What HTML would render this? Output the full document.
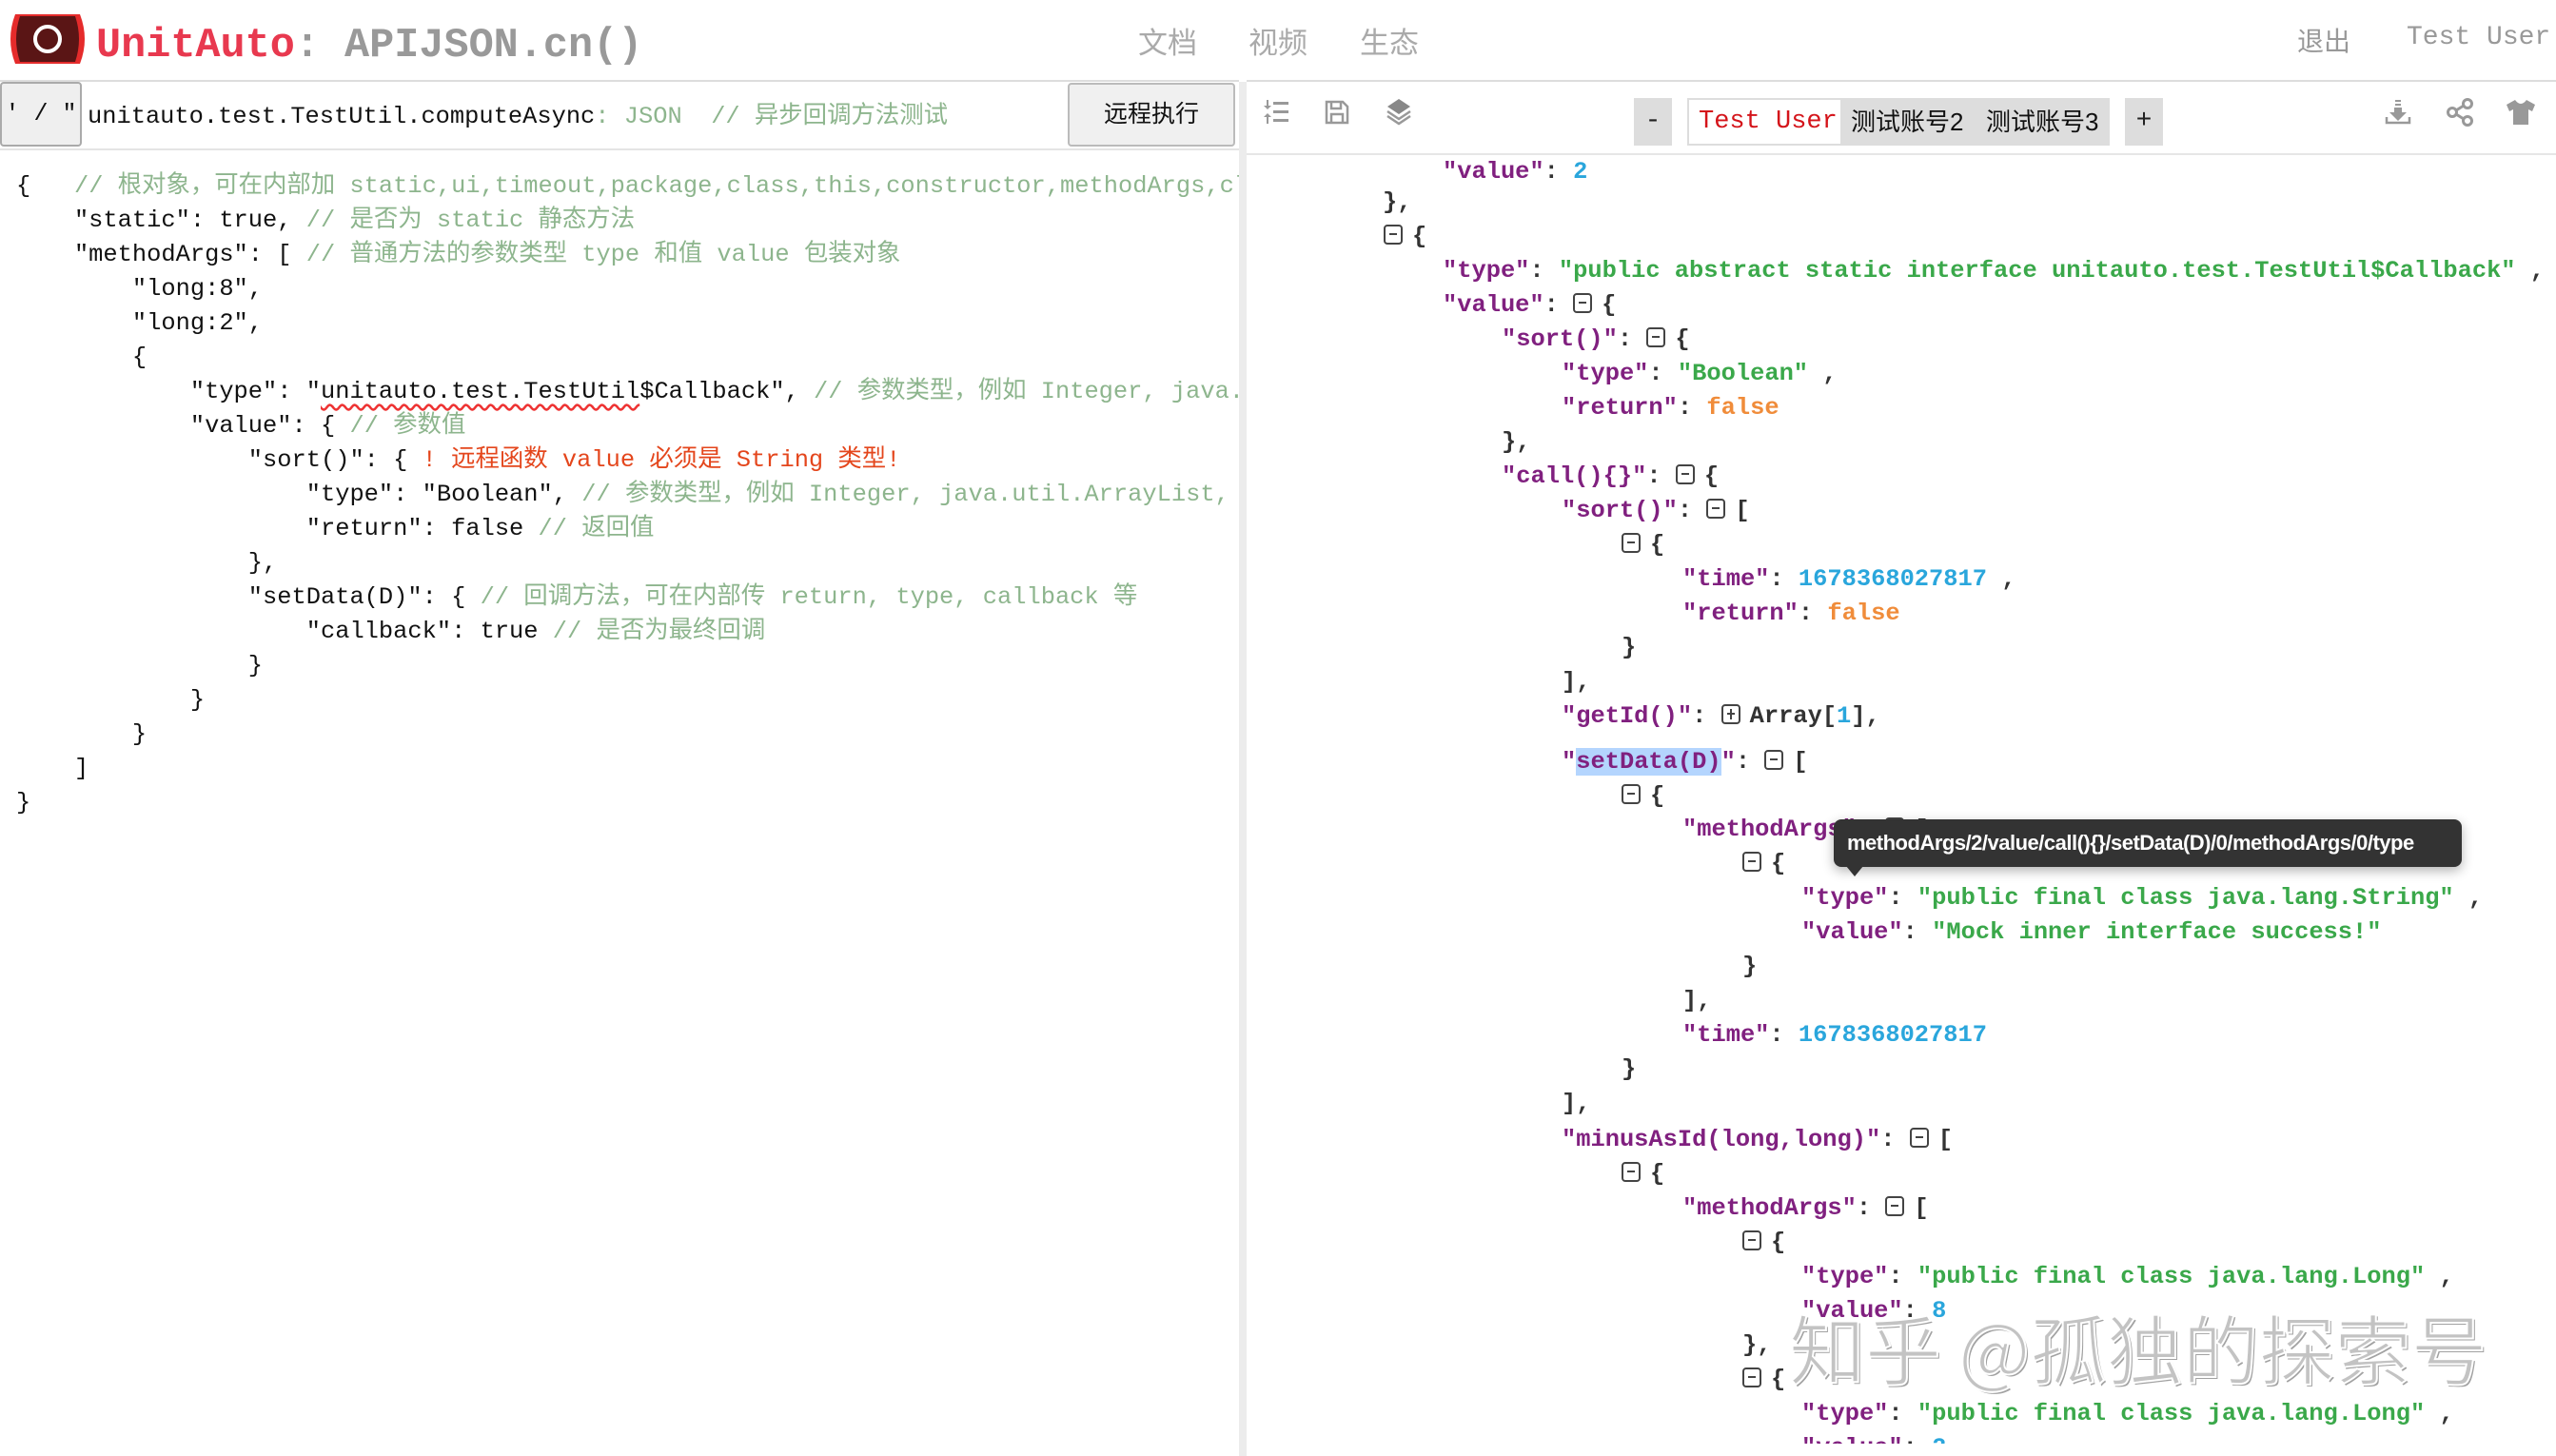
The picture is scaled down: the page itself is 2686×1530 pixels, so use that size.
<!DOCTYPE html>
<html><head><meta charset="utf-8">
<style>
*{margin:0;padding:0;box-sizing:border-box}
body{width:2686px;height:1530px;overflow:hidden;background:#fff;position:relative;font-family:"Liberation Mono","Noto Sans CJK SC",monospace}
.abs{position:absolute;white-space:pre}
.nav{position:absolute;top:20px;font-family:"Liberation Sans","Noto Sans CJK SC",sans-serif;font-size:31px;color:#aaa}
#left{position:absolute;left:0;top:164px;width:1302px;height:1366px;overflow:hidden}
#left .l{position:absolute;left:17px;font-size:25.4px;line-height:36px;height:36px;white-space:pre;color:#111}
.c{color:#8db58d}
.w{color:#e4461c}
.sq{text-decoration:underline wavy #e33;text-underline-offset:6px}
#div{position:absolute;left:1302px;top:86px;width:8px;height:1444px;background:#ececec}
#right{position:absolute;left:1310px;top:163px;width:1376px;height:1367px;overflow:hidden}
#ri{position:absolute;left:0;top:6px;width:1376px;height:1400px}
.r{position:absolute;font-size:25.4px;line-height:36px;height:36px;white-space:pre;font-weight:bold;color:#333}
.k{color:#80207f}.s{color:#3aa84a}.n{color:#2aa6dc}.f{color:#f08c3a}
.b{display:inline-block;width:20px;height:21px;border:2px solid #444;border-radius:4px;vertical-align:-2px;position:relative;margin-right:10px}
.b:after{content:"";position:absolute;left:4px;right:4px;top:7px;height:2px;background:#444}
.p:before{content:"";position:absolute;top:3px;bottom:3px;left:7px;width:2px;background:#444}
.hl{background:#b4d5fe}
</style></head><body>

<svg class="abs" style="left:6px;top:13px" width="88" height="56" viewBox="0 0 88 56">
<path d="M10 2 H78 Q88 28 78 54 H10 Q0 28 10 2Z" fill="#e52b2b"/>
<path d="M15 4 H73 Q81 28 73 52 H15 Q7 28 15 4Z" fill="#5a1515"/>
<circle cx="44" cy="28" r="13" fill="none" stroke="#fff" stroke-width="4"/>
</svg>
<div class="abs" style="left:101px;top:21px;font-size:43.5px;font-weight:bold;line-height:56px"><span style="color:#e8394f">UnitAuto</span><span style="color:#999">: APIJSON.cn()</span></div>
<div class="nav" style="left:1196px">文档</div>
<div class="nav" style="left:1312px">视频</div>
<div class="nav" style="left:1429px">生态</div>
<div class="nav" style="left:2414px;font-size:28px;top:22px;color:#999">退出</div>
<div class="abs" style="left:2529px;top:24px;font-size:28px;color:#999">Test User</div>

<div class="abs" style="left:0;top:84px;width:1302px;height:2px;background:#ddd"></div>
<div class="abs" style="left:0;top:86px;width:86px;height:68px;background:#efefef;border:2px solid #aaa;border-radius:4px;font-size:25px;line-height:64px;text-align:center;color:#111">' / "</div>
<div class="abs" style="left:92px;top:105px;font-size:25.4px;line-height:36px;color:#111">unitauto.test.TestUtil.computeAsync<span class="c">: JSON  // 异步回调方法测试</span></div>
<div class="abs" style="left:1122px;top:87px;width:176px;height:67px;background:#f0f0f0;border:2px solid #bbb;border-radius:4px;font-family:'Liberation Sans','Noto Sans CJK SC',sans-serif;font-size:25px;line-height:63px;text-align:center;color:#111">远程执行</div>
<div class="abs" style="left:0;top:156px;width:1302px;height:2px;background:#e4e4e4"></div>

<div id="left">
<div class="l" style="top:14px">{   <span class="c">// 根对象，可在内部加 static,ui,timeout,package,class,this,constructor,methodArgs,cl</span></div>
<div class="l" style="top:50px">    "static": true, <span class="c">// 是否为 static 静态方法</span></div>
<div class="l" style="top:86px">    "methodArgs": [ <span class="c">// 普通方法的参数类型 type 和值 value 包装对象</span></div>
<div class="l" style="top:122px">        "long:8",</div>
<div class="l" style="top:158px">        "long:2",</div>
<div class="l" style="top:194px">        {</div>
<div class="l" style="top:230px">            "type": "<span class="sq">unitauto.test.TestUtil</span>$Callback", <span class="c">// 参数类型，例如 Integer, java.</span></div>
<div class="l" style="top:266px">            "value": { <span class="c">// 参数值</span></div>
<div class="l" style="top:302px">                "sort()": { <span class="w">! 远程函数 value 必须是 String 类型!</span></div>
<div class="l" style="top:338px">                    "type": "Boolean", <span class="c">// 参数类型，例如 Integer, java.util.ArrayList,</span></div>
<div class="l" style="top:374px">                    "return": false <span class="c">// 返回值</span></div>
<div class="l" style="top:410px">                },</div>
<div class="l" style="top:446px">                "setData(D)": { <span class="c">// 回调方法，可在内部传 return, type, callback 等</span></div>
<div class="l" style="top:482px">                    "callback": true <span class="c">// 是否为最终回调</span></div>
<div class="l" style="top:518px">                }</div>
<div class="l" style="top:554px">            }</div>
<div class="l" style="top:590px">        }</div>
<div class="l" style="top:626px">    ]</div>
<div class="l" style="top:662px">}</div>
</div>

<div id="div"></div>

<div class="abs" style="left:1310px;top:84px;width:1376px;height:2px;background:#ddd"></div>
<svg class="abs" style="left:1326px;top:103px" width="32" height="30" viewBox="0 0 32 30" fill="#999">
<rect x="12" y="4" width="16" height="3"/><rect x="12" y="13" width="16" height="3"/><rect x="12" y="22" width="16" height="3"/>
<path d="M5 2v6h-3l4 4 4-4h-3V2z"/><path d="M6 16l-4 4h3v7h2v-7h3z"/></svg>
<svg class="abs" style="left:1391px;top:104px" width="28" height="28" viewBox="0 0 28 28" fill="none" stroke="#999" stroke-width="2.5">
<path d="M3 3h17l5 5v17H3z"/><path d="M8 3v7h10V3"/><path d="M8 25v-9h12v9"/></svg>
<svg class="abs" style="left:1456px;top:102px" width="28" height="30" viewBox="0 0 28 30">
<path d="M14 2l12 8-12 8-12-8z" fill="#888"/><path d="M2 15l12 8 12-8" fill="none" stroke="#999" stroke-width="2.5"/><path d="M2 20l12 8 12-8" fill="none" stroke="#999" stroke-width="2.5"/></svg>

<div class="abs" style="left:1717px;top:103px;width:40px;height:50px;background:#ddd;font-size:28px;line-height:50px;text-align:center;color:#222">-</div>
<div class="abs" style="left:1773px;top:103px;width:444px;height:50px;background:#ddd"></div>
<div class="abs" style="left:1775px;top:105px;width:159px;height:46px;background:#fff"></div>
<div class="abs" style="left:1785px;top:105px;font-size:27px;line-height:46px;color:#d4141a">Test User</div>
<div class="abs" style="left:1945px;top:105px;font-family:'Liberation Sans','Noto Sans CJK SC',sans-serif;font-size:26px;line-height:46px;color:#111">测试账号2</div>
<div class="abs" style="left:2087px;top:105px;font-family:'Liberation Sans','Noto Sans CJK SC',sans-serif;font-size:26px;line-height:46px;color:#111">测试账号3</div>
<div class="abs" style="left:2233px;top:103px;width:40px;height:50px;background:#ddd;font-size:28px;line-height:50px;text-align:center;color:#222">+</div>

<svg class="abs" style="left:2506px;top:104px" width="28" height="28" viewBox="0 0 28 28" fill="#999">
<rect x="11" y="1" width="6" height="2"/><rect x="11" y="5" width="6" height="2"/><path d="M10 9h8v5h5l-9 9-9-9h5z"/><path d="M2 19v6h24v-6" fill="none" stroke="#999" stroke-width="2.5"/></svg>
<svg class="abs" style="left:2570px;top:103px" width="30" height="30" viewBox="0 0 30 30" fill="none" stroke="#999" stroke-width="3">
<circle cx="7" cy="15" r="4.5"/><circle cx="23" cy="6" r="4.5"/><circle cx="23" cy="24" r="4.5"/><path d="M11 13l8-5M11 17l8 5"/></svg>
<svg class="abs" style="left:2633px;top:104px" width="32" height="28" viewBox="0 0 32 28" fill="#999">
<path d="M10 1l-9 5 3 7 4-2v16h16V11l4 2 3-7-9-5q-3 4-6 4t-6-4z"/></svg>
<div class="abs" style="left:1310px;top:161px;width:1376px;height:2px;background:#e6e6e6"></div>

<div id="right"><div id="ri">
<div class="r" style="left:206px;top:-6px"><span class="k">"value"</span>: <span class="n">2</span></div>
<div class="r" style="left:143px;top:26px">},</div>
<div class="r" style="left:144px;top:62px"><span class="b"></span>{</div>
<div class="r" style="left:206px;top:98px"><span class="k">"type"</span>: <span class="s">"public abstract static interface unitauto.test.TestUtil$Callback"</span> ,</div>
<div class="r" style="left:206px;top:134px"><span class="k">"value"</span>: <span class="b"></span>{</div>
<div class="r" style="left:268px;top:170px"><span class="k">"sort()"</span>: <span class="b"></span>{</div>
<div class="r" style="left:331px;top:206px"><span class="k">"type"</span>: <span class="s">"Boolean"</span> ,</div>
<div class="r" style="left:331px;top:242px"><span class="k">"return"</span>: <span class="f">false</span></div>
<div class="r" style="left:268px;top:278px">},</div>
<div class="r" style="left:268px;top:314px"><span class="k">"call(){}"</span>: <span class="b"></span>{</div>
<div class="r" style="left:331px;top:350px"><span class="k">"sort()"</span>: <span class="b"></span>[</div>
<div class="r" style="left:394px;top:386px"><span class="b"></span>{</div>
<div class="r" style="left:458px;top:422px"><span class="k">"time"</span>: <span class="n">1678368027817</span> ,</div>
<div class="r" style="left:458px;top:458px"><span class="k">"return"</span>: <span class="f">false</span></div>
<div class="r" style="left:394px;top:494px">}</div>
<div class="r" style="left:331px;top:530px">],</div>
<div class="r" style="left:331px;top:566px"><span class="k">"getId()"</span>: <span class="b p"></span>Array[<span class="n">1</span>],</div>
<div class="r" style="left:331px;top:614px"><span class="k">"<span class="hl">setData(D)</span>"</span>: <span class="b"></span>[</div>
<div class="r" style="left:394px;top:650px"><span class="b"></span>{</div>
<div class="r" style="left:458px;top:685px"><span class="k">"methodArgs"</span>: <span class="b"></span>[</div>
<div class="r" style="left:521px;top:721px"><span class="b"></span>{</div>
<div class="r" style="left:583px;top:757px"><span class="k">"type"</span>: <span class="s">"public final class java.lang.String"</span> ,</div>
<div class="r" style="left:583px;top:793px"><span class="k">"value"</span>: <span class="s">"Mock inner interface success!"</span></div>
<div class="r" style="left:521px;top:829px">}</div>
<div class="r" style="left:458px;top:865px">],</div>
<div class="r" style="left:458px;top:901px"><span class="k">"time"</span>: <span class="n">1678368027817</span></div>
<div class="r" style="left:394px;top:937px">}</div>
<div class="r" style="left:331px;top:973px">],</div>
<div class="r" style="left:331px;top:1011px"><span class="k">"minusAsId(long,long)"</span>: <span class="b"></span>[</div>
<div class="r" style="left:394px;top:1047px"><span class="b"></span>{</div>
<div class="r" style="left:458px;top:1083px"><span class="k">"methodArgs"</span>: <span class="b"></span>[</div>
<div class="r" style="left:521px;top:1119px"><span class="b"></span>{</div>
<div class="r" style="left:583px;top:1155px"><span class="k">"type"</span>: <span class="s">"public final class java.lang.Long"</span> ,</div>
<div class="r" style="left:583px;top:1191px"><span class="k">"value"</span>: <span class="n">8</span></div>
<div class="r" style="left:521px;top:1227px">},</div>
<div class="r" style="left:521px;top:1263px"><span class="b"></span>{</div>
<div class="r" style="left:583px;top:1299px"><span class="k">"type"</span>: <span class="s">"public final class java.lang.Long"</span> ,</div>
<div class="r" style="left:583px;top:1335px"><span class="k">"value"</span>: <span class="n">2</span></div>
</div></div>
<div class="abs" style="left:1310px;top:1517px;width:1376px;height:13px;background:#fff"></div>

<div class="abs" style="left:1927px;top:861px;width:660px;height:50px;background:#333;border-radius:8px;box-shadow:0 4px 12px rgba(0,0,0,.3);color:#fff;font-family:'Liberation Sans',sans-serif;font-weight:bold;font-size:22px;line-height:50px;padding-left:14px;letter-spacing:-0.5px">methodArgs/2/value/call(){}/setData(D)/0/methodArgs/0/type</div>
<div class="abs" style="left:1940px;top:910px;width:0;height:0;border-left:9px solid transparent;border-right:9px solid transparent;border-top:11px solid #333"></div>

<div class="abs" style="left:1880px;top:1370px;font-family:'Noto Sans CJK SC',sans-serif;font-size:80px;line-height:90px;color:#bdbdbd;-webkit-text-stroke:2px #fff;text-shadow:2px 2px 0 #999;opacity:.9">知乎 @孤独的探索号</div>
</body></html>
